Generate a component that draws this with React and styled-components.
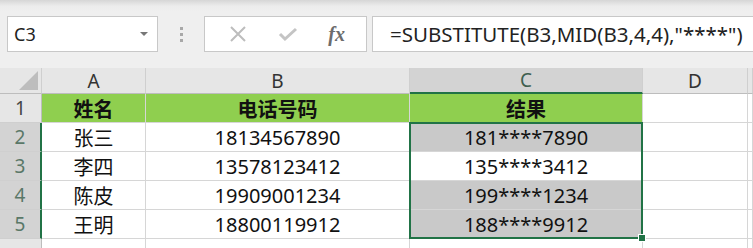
import React from 'react';
import styled, { createGlobalStyle } from 'styled-components';

const GlobalStyle = createGlobalStyle`
    body {
        margin: 0;
        background: #efefef;
        font-family: "Noto Sans", "Noto Sans CJK SC", sans-serif;
        overflow: hidden;
    }
`;

const Page = styled.div`
    width: 753px;
    height: 248px;
    overflow: hidden;
    background: linear-gradient(#d6d6d6 0px, #ececec 6px, #efefef 12px);
`;

const FormulaBar = styled.div`
    display: flex;
    align-items: center;
    height: 36px;
    padding: 16px 0 16px 7px;
`;

const NameBox = styled.div`
    box-sizing: border-box;
    width: 151px;
    height: 36px;
    background: #fff;
    border: 1px solid #c8c8c8;
    display: flex;
    align-items: center;
    justify-content: space-between;
    padding: 0 9px 0 6px;
    font-size: 18px;
    color: #222;
`;

const Caret = styled.span`
    width: 0;
    height: 0;
    border-left: 4px solid transparent;
    border-right: 4px solid transparent;
    border-top: 4px solid #777;
`;

const Grip = styled.div`
    width: 46px;
    display: flex;
    flex-direction: column;
    align-items: center;
    gap: 3px;
    span {
        width: 3px;
        height: 3px;
        background: #a8a8a8;
    }
`;

const IconBox = styled.div`
    box-sizing: border-box;
    width: 163px;
    height: 36px;
    background: #fff;
    border: 1px solid #c8c8c8;
    display: flex;
    align-items: center;
    justify-content: space-around;
    padding: 0 6px 0 8px;
`;

const Fx = styled.span`
    font-family: "Liberation Serif", serif;
    font-style: italic;
    font-weight: bold;
    font-size: 20px;
    color: #6c6c6c;
`;

const FormulaInput = styled.div`
    box-sizing: border-box;
    flex: 1;
    margin-left: 5px;
    height: 36px;
    background: #fff;
    border: 1px solid #c8c8c8;
    border-right: none;
    display: flex;
    align-items: center;
    padding-left: 17px;
    font-size: 20.5px;
    color: #222;
    white-space: nowrap;
`;

const Sheet = styled.div`
    position: relative;
    display: grid;
    grid-template-columns: 42px 104px 264px 233px 105px 1fr;
    grid-template-rows: 26px repeat(6, 29px);
    background: #fff;
`;

const Corner = styled.div`
    background: #e6e6e6;
    border-right: 1px solid #cfcfcf;
    border-bottom: 1px solid #bdbdbd;
    position: relative;
    &::after {
        content: '';
        position: absolute;
        right: 3px;
        bottom: 3px;
        border-left: 19px solid transparent;
        border-bottom: 19px solid #bdbdbd;
    }
`;

const ColHead = styled.div`
    background: ${(p) => (p.$sel ? '#d3d3d3' : '#e6e6e6')};
    border-right: 1px solid #cfcfcf;
    border-bottom: ${(p) => (p.$sel ? '2px solid #217346' : '1px solid #bdbdbd')};
    color: ${(p) => (p.$sel ? '#3f5f4f' : '#333')};
    display: flex;
    align-items: center;
    justify-content: center;
    font-size: 19px;
`;

const RowHead = styled.div`
    background: ${(p) => (p.$sel ? '#d3d3d3' : '#e6e6e6')};
    border-bottom: 1px solid #cfcfcf;
    border-right: ${(p) => (p.$sel ? '2px solid #217346' : '1px solid #bdbdbd')};
    color: ${(p) => (p.$sel ? '#5a7868' : '#444')};
    display: flex;
    align-items: center;
    justify-content: center;
    font-size: 19px;
`;

const Cell = styled.div`
    box-sizing: border-box;
    background: ${(p) => p.$bg || '#fff'};
    border-right: 1px solid #d6d6d6;
    border-bottom: 1px solid #d6d6d6;
    display: flex;
    align-items: center;
    justify-content: center;
    font-size: 20px;
    font-weight: ${(p) => (p.$bold ? 700 : 400)};
    font-family: ${(p) => (p.$bold ? '"Noto Sans CJK SC", sans-serif' : '"Noto Sans", "Noto Sans CJK SC", sans-serif')};
    color: #111;
`;

const Selection = styled.div`
    position: absolute;
    grid-column: 4 / 5;
    grid-row: 3 / 7;
    top: -1px;
    left: -1px;
    right: 0;
    bottom: 0;
    border: 2px solid #217346;
    pointer-events: none;
    z-index: 2;
    &::after {
        content: '';
        position: absolute;
        right: -5px;
        bottom: -5px;
        width: 6px;
        height: 6px;
        background: #217346;
        border: 1px solid #fff;
    }
`;

const XIcon = () => (
    <svg width="20" height="20" viewBox="0 0 20 20">
        <path d="M3 3 L17 17 M17 3 L3 17" stroke="#bdbdbd" strokeWidth="2" fill="none" />
    </svg>
);

const CheckIcon = () => (
    <svg width="20" height="16" viewBox="0 0 20 16">
        <path d="M2 8 L7 13 L18 3" stroke="#c4c4c4" strokeWidth="3" fill="none" />
    </svg>
);

const rows = [
    ['张三', '18134567890', '181****7890'],
    ['李四', '13578123412', '135****3412'],
    ['陈皮', '19909001234', '199****1234'],
    ['王明', '18800119912', '188****9912'],
];

const App = () => {
    return (
        <Page>
            <GlobalStyle />
            <FormulaBar>
                <NameBox>
                    C3
                    <Caret />
                </NameBox>
                <Grip>
                    <span />
                    <span />
                    <span />
                </Grip>
                <IconBox>
                    <XIcon />
                    <CheckIcon />
                    <Fx>fx</Fx>
                </IconBox>
                <FormulaInput>=SUBSTITUTE(B3,MID(B3,4,4),"****")</FormulaInput>
            </FormulaBar>
            <Sheet>
                <Corner />
                <ColHead>A</ColHead>
                <ColHead>B</ColHead>
                <ColHead $sel>C</ColHead>
                <ColHead>D</ColHead>
                <ColHead />

                <RowHead>1</RowHead>
                <Cell $bold $bg="#8fcf4f">姓名</Cell>
                <Cell $bold $bg="#8fcf4f">电话号码</Cell>
                <Cell $bold $bg="#8fcf4f">结果</Cell>
                <Cell />
                <Cell />

                {rows.map((r, i) => (
                    <React.Fragment key={i}>
                        <RowHead $sel>{i + 2}</RowHead>
                        <Cell>{r[0]}</Cell>
                        <Cell>{r[1]}</Cell>
                        <Cell $bg={i === 1 ? '#fff' : '#c9c9c9'}>{r[2]}</Cell>
                        <Cell />
                        <Cell />
                    </React.Fragment>
                ))}

                <RowHead />
                <Cell />
                <Cell />
                <Cell />
                <Cell />
                <Cell />

                <Selection />
            </Sheet>
        </Page>
    );
};

export default App;
